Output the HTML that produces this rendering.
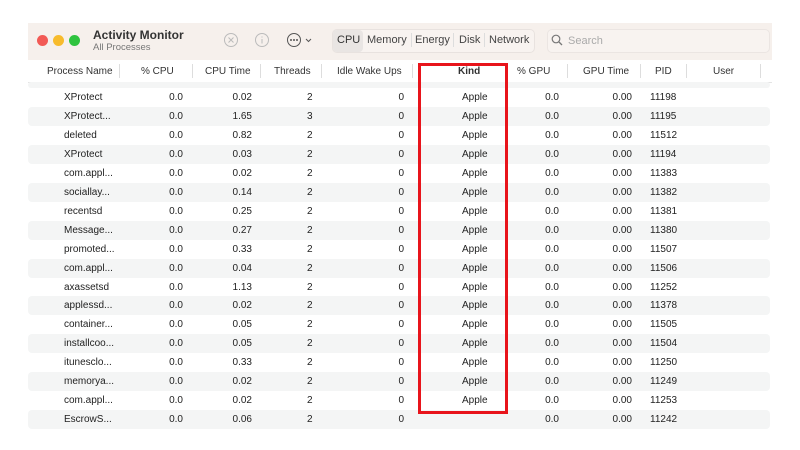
<!DOCTYPE html><html><head><style>
body{margin:0;width:800px;height:450px;background:#fff;font-family:"Liberation Sans",sans-serif;position:relative;overflow:hidden;color:#222}
.tb{position:absolute;left:28px;top:23px;width:744px;height:37px;background:#f6f0ec}
.a{position:absolute;white-space:nowrap}
.dot{position:absolute;top:35px;width:11px;height:11px;border-radius:50%}
.hd{position:absolute;top:60px;left:28px;width:744px;height:22px;border-bottom:1px solid #e4e4e4;background:#fff}
.sep{position:absolute;top:64px;width:1px;height:14px;background:#ddd}
.h{position:absolute;top:66px;font-size:10px;color:#333}
.row{position:absolute;left:28px;width:742px;height:19px;font-size:10px;color:#222}
.row.g{background:#f4f5f5;border-radius:4px}
.row span{position:absolute;top:4px}
.r{text-align:right}
</style></head><body>
<div class="tb"></div>
<div class="dot" style="left:37px;background:#f25a55"></div>
<div class="dot" style="left:53px;background:#f7bb2c"></div>
<div class="dot" style="left:69px;background:#2fc33f"></div>
<div class="a" style="left:93px;top:28px;font-size:12px;font-weight:bold;color:#333">Activity Monitor</div>
<div class="a" style="left:93px;top:42px;font-size:9.5px;color:#777">All Processes</div>
<svg class="a" style="left:223px;top:32px" width="16" height="16"><circle cx="8" cy="8" r="6.5" fill="none" stroke="#bbb"/><path d="M5.5 5.5l5 5M10.5 5.5l-5 5" stroke="#bbb"/></svg>
<svg class="a" style="left:254px;top:32px" width="16" height="16"><circle cx="8" cy="8" r="6.5" fill="none" stroke="#bbb"/><path d="M8 7v4.5M8 4.5v1" stroke="#bbb"/></svg>
<svg class="a" style="left:286px;top:32px" width="30" height="16"><circle cx="8" cy="8" r="6.5" fill="none" stroke="#555"/><circle cx="5" cy="8" r="1" fill="#555"/><circle cx="8" cy="8" r="1" fill="#555"/><circle cx="11" cy="8" r="1" fill="#555"/><path d="M20 7l2.5 2.5L25 7" fill="none" stroke="#555"/></svg>
<div class="a" style="left:332px;top:29px;width:201px;height:22px;border:1px solid #e8e2df;border-radius:5px;background:#f8f3f0"></div>
<div class="a" style="left:333px;top:30px;width:30px;height:22px;background:#e9e5e3;border-radius:4px"></div>
<div class="a" style="left:337px;top:34px;font-size:11px;color:#333">CPU</div>
<div class="a" style="left:367px;top:34px;font-size:11px;color:#444">Memory</div>
<div class="sep" style="left:411px;top:33px"></div>
<div class="a" style="left:415px;top:34px;font-size:11px;color:#444">Energy</div>
<div class="sep" style="left:453px;top:33px"></div>
<div class="a" style="left:459px;top:34px;font-size:11px;color:#444">Disk</div>
<div class="sep" style="left:484px;top:33px"></div>
<div class="a" style="left:489px;top:34px;font-size:11px;color:#444">Network</div>
<div class="a" style="left:547px;top:29px;width:221px;height:22px;border:1px solid #ebe5e2;border-radius:5px;background:#f8f3f0"></div>
<svg class="a" style="left:551px;top:34px" width="12" height="12"><circle cx="5" cy="5" r="3.8" fill="none" stroke="#777" stroke-width="1.2"/><path d="M8 8l3 3" stroke="#777" stroke-width="1.3"/></svg>
<div class="a" style="left:568px;top:35px;font-size:11px;color:#aaa">Search</div>
<div class="hd"></div>
<div class="h" style="left:47px">Process Name</div><div class="sep" style="left:119px"></div>
<div class="h" style="left:141px">% CPU</div><div class="sep" style="left:192px"></div>
<div class="h" style="left:205px">CPU Time</div><div class="sep" style="left:260px"></div>
<div class="h" style="left:274px">Threads</div><div class="sep" style="left:321px"></div>
<div class="h" style="left:337px">Idle Wake Ups</div><div class="sep" style="left:412px"></div>
<div class="h" style="left:458px;font-weight:bold">Kind</div><div class="sep" style="left:506px"></div>
<div class="h" style="left:517px">% GPU</div><div class="sep" style="left:567px"></div>
<div class="h" style="left:583px">GPU Time</div><div class="sep" style="left:640px"></div>
<div class="h" style="left:655px">PID</div><div class="sep" style="left:686px"></div>
<div class="h" style="left:713px">User</div><div class="sep" style="left:760px"></div>
<div class="row g" style="top:82px;height:6px"></div>
<div id="rows"></div>
<script>
var d=[["XProtect","0.02",2,11198],["XProtect...","1.65",3,11195],["deleted","0.82",2,11512],["XProtect","0.03",2,11194],["com.appl...","0.02",2,11383],["sociallay...","0.14",2,11382],["recentsd","0.25",2,11381],["Message...","0.27",2,11380],["promoted...","0.33",2,11507],["com.appl...","0.04",2,11506],["axassetsd","1.13",2,11252],["applessd...","0.02",2,11378],["container...","0.05",2,11505],["installcoo...","0.05",2,11504],["itunesclo...","0.33",2,11250],["memorya...","0.02",2,11249],["com.appl...","0.02",2,11253],["EscrowS...","0.06",2,11242]];
var h="";d.forEach(function(r,i){var t=88+i*18.95;var last=i==17;
h+='<div class="row'+(i%2?' g':'')+'" style="top:'+t+'px"><span style="left:36px">'+r[0]+'</span><span class="r" style="left:100px;width:55px">0.0</span><span class="r" style="left:170px;width:54px">'+r[1]+'</span><span style="left:279px">'+r[2]+'</span><span class="r" style="left:330px;width:46px">0</span>'+(last?'':'<span style="left:434px">Apple</span>')+'<span class="r" style="left:480px;width:51px">0.0</span><span class="r" style="left:550px;width:54px">0.00</span><span style="left:622px">'+r[3]+'</span></div>';});
document.getElementById("rows").innerHTML=h;
</script>
<div class="a" style="left:418px;top:63px;width:84px;height:345px;border:3px solid #e8141b"></div>
</body></html>
